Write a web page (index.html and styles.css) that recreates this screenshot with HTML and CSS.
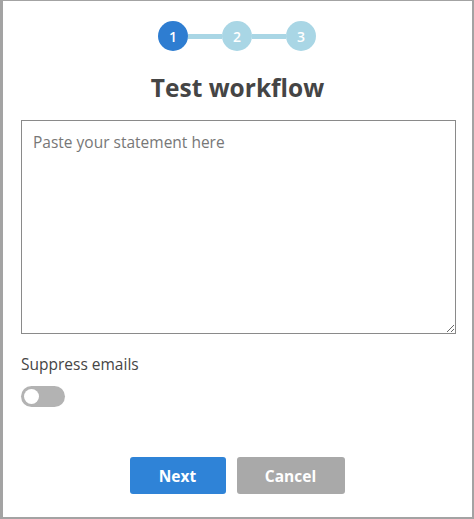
FILE: index.html
```html
<!DOCTYPE html>
<html>
<head>
<meta charset="utf-8">
<link rel="stylesheet" href="styles.css">
</head>
<body>
<div class="dialog">
  <div class="stepper">
    <span class="step active">1</span>
    <span class="bar"></span>
    <span class="step">2</span>
    <span class="bar"></span>
    <span class="step">3</span>
  </div>
  <h1 class="title">Test workflow</h1>
  <textarea class="statement" placeholder="Paste your statement here"></textarea>
  <div class="label">Suppress emails</div>
  <div class="toggle"><span class="knob"></span></div>
  <div class="actions">
    <button class="btn primary">Next</button>
    <button class="btn secondary">Cancel</button>
  </div>
</div>
</body>
</html>
```
FILE: styles.css
```css
html, body {
  margin: 0;
  padding: 0;
  height: 100%;
}
body {
  background: #a3a3a3;
  font-family: "Open Sans", "Noto Sans", sans-serif;
  padding: 1px 2px 3px 3px;
  box-sizing: border-box;
}
.dialog {
  background: #fff;
  height: 516px;
  box-sizing: border-box;
  padding: 20px 16px 0 18px;
  display: flex;
  flex-direction: column;
}
.stepper {
  display: flex;
  align-items: center;
  justify-content: center;
  height: 30px;
  padding-right: 3px;
}
.step {
  width: 30px;
  height: 30px;
  border-radius: 50%;
  background: #a9d6e5;
  color: #fff;
  font-size: 14px;
  font-weight: 600;
  display: flex;
  align-items: center;
  justify-content: center;
}
.step.active {
  background: #2e7dd1;
}
.bar {
  width: 34px;
  height: 5px;
  background: #a9d6e5;
}
.title {
  margin: 20px 0 0;
  text-align: center;
  font-size: 24.5px;
  font-weight: 700;
  color: #454545;
  line-height: 34px;
  padding-right: 2px;
}
.statement {
  margin-top: 15px;
  width: 100%;
  height: 214px;
  box-sizing: border-box;
  border: 1px solid #8a8a8a;
  padding: 10px 11px;
  font-family: inherit;
  font-size: 15.5px;
  resize: vertical;
}
.statement::placeholder {
  color: #777;
}
.label {
  margin-top: 19px;
  font-size: 15.5px;
  color: #454545;
  line-height: 22px;
}
.toggle {
  margin-top: 11px;
  width: 44px;
  height: 21px;
  border-radius: 11px;
  background: #b3b3b3;
  position: relative;
}
.knob {
  position: absolute;
  left: 3px;
  top: 3px;
  width: 15px;
  height: 15px;
  border-radius: 50%;
  background: #fff;
}
.actions {
  margin-top: 50px;
  display: flex;
  justify-content: center;
  gap: 11px;
  padding-right: 3px;
}
.btn {
  border: none;
  border-radius: 3px;
  height: 37px;
  color: #fff;
  font-family: inherit;
  font-size: 15.5px;
  font-weight: 700;
}
.primary {
  width: 96px;
  background: #2f83d7;
}
.secondary {
  width: 108px;
  background: #a9a9a9;
}
```
